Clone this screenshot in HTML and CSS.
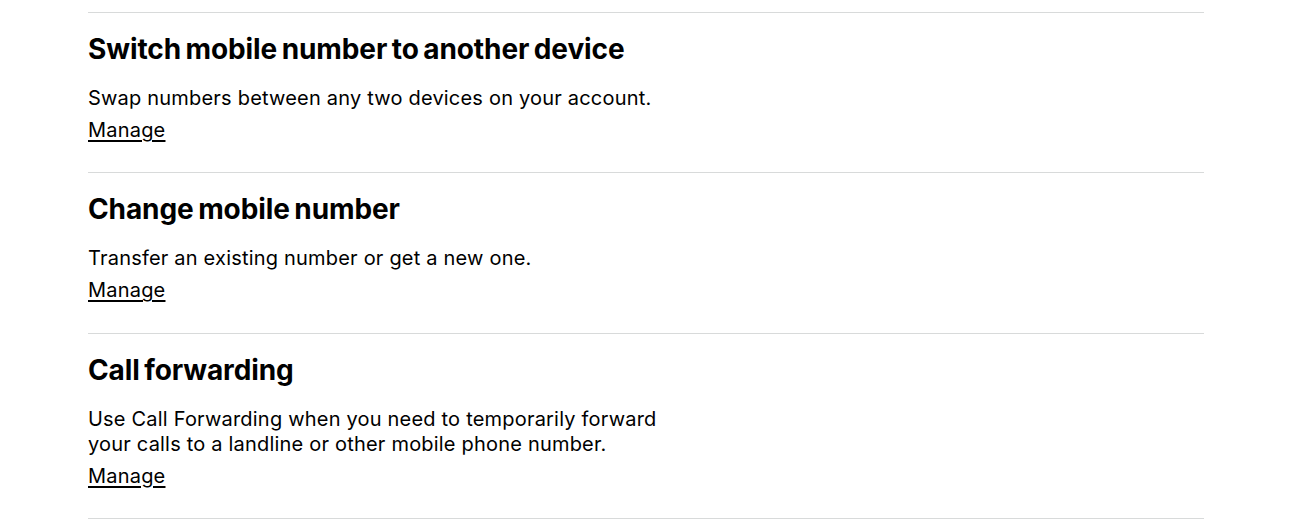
FILE: index.html
```html
<!DOCTYPE html>
<html lang="en">
<head>
<meta charset="utf-8">
<title>Line settings</title>
<link rel="stylesheet" href="styles.css">
</head>
<body>
<main class="list">
  <section class="item">
    <h2 class="title">Switch mobile number to another device</h2>
    <p class="desc">Swap numbers between any two devices on your account.</p>
    <a class="link" href="#">Manage</a>
  </section>
  <section class="item">
    <h2 class="title">Change mobile number</h2>
    <p class="desc">Transfer an existing number or get a new one.</p>
    <a class="link" href="#">Manage</a>
  </section>
  <section class="item">
    <h2 class="title">Call forwarding</h2>
    <p class="desc">Use Call Forwarding when you need to temporarily forward your calls to a landline or other mobile phone number.</p>
    <a class="link" href="#">Manage</a>
  </section>
  <div class="end"></div>
</main>
</body>
</html>
```
FILE: styles.css
```css
html, body {
  margin: 0;
  padding: 0;
  background: #ffffff;
}
body {
  font-family: Inter, "Liberation Sans", Arial, sans-serif;
  color: #000000;
}
.list {
  width: 1116px;
  margin-left: 88px;
  padding-top: 12px;
}
.item {
  border-top: 1px solid #d8dada;
  padding: 18px 0 29.4px;
  display: flex;
  flex-direction: column;
  align-items: flex-start;
}
.title {
  margin: 0;
  font-size: 28px;
  line-height: 36px;
  font-weight: 700;
  letter-spacing: -0.1px;
  word-spacing: -2px;
}
.desc {
  margin: 19px 0 7px;
  font-size: 20px;
  line-height: 25px;
  font-weight: 400;
  letter-spacing: 0.2px;
  max-width: 592px;
}
.link {
  font-size: 20px;
  line-height: 25px;
  letter-spacing: 0.2px;
  color: #000000;
  text-decoration: underline;
  text-underline-offset: 3px;
}
.end {
  border-top: 1px solid #d8dada;
}
```
